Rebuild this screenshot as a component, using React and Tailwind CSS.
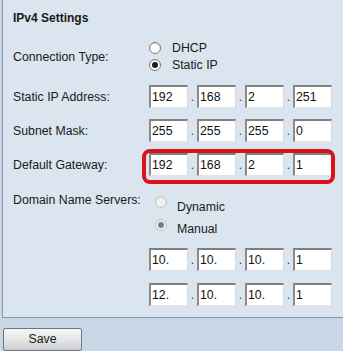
import React, { Fragment } from "react";

const font = { fontFamily: '"Liberation Sans", Arial, sans-serif' };

function Field({ v }) {
  return (
    <div className="w-[39px] h-[23px] bg-white border-t-2 border-l-2 border-r border-b border-t-[#7f7f7f] border-l-[#8a8a8a] border-r-[#d8d8d8] border-b-[#e4e4e4] flex items-center pl-[1px] text-[12.3px] leading-[14px] text-[#111]">
      {v}
    </div>
  );
}

function IP({ vals }) {
  return (
    <div className="flex items-center">
      {vals.map((v, i) => (
        <Fragment key={i}>
          {i > 0 && (
            <span className="w-[9px] text-center text-[12.3px] leading-[14px] text-[#333]">.</span>
          )}
          <Field v={v} />
        </Fragment>
      ))}
    </div>
  );
}

function Radio({ checked, disabled }) {
  return (
    <span
      className={
        "w-[12px] h-[12px] rounded-full flex items-center justify-center shrink-0 border " +
        (disabled
          ? "bg-[#f0f0f0] border-[#c4c4c4] shadow-[inset_0_1px_1px_rgba(0,0,0,0.08)]"
          : "bg-white border-[#7a7a7a] shadow-[inset_0_1px_1px_rgba(0,0,0,0.15)]")
      }
    >
      {checked && (
        <span
          className={
            "w-[6px] h-[6px] rounded-full " + (disabled ? "bg-[#7d7d7d]" : "bg-[#1c1c1c]")
          }
        />
      )}
    </span>
  );
}

function Row({ label, children, className = "" }) {
  return (
    <div className={"flex items-center " + className}>
      <div className="w-[136px] text-[12.3px] leading-[14px] text-[#1a1a1a]">{label}</div>
      {children}
    </div>
  );
}

export default function App() {
  return (
    <div className="w-[343px] h-[351px] overflow-hidden bg-[#c7d7e6]" style={font}>
      <div className="ml-[2px] bg-[#dbe5ef] border-l border-b border-[#8797a8] pl-[10px] pt-[11px] pb-[11px]">
        <div className="text-[12px] leading-[14px] font-bold text-[#1a1a1a]">IPv4 Settings</div>

        <div className="flex mt-[14px] h-[34px]">
          <div className="w-[136px] pt-[11px] text-[12.3px] leading-[14px] text-[#1a1a1a]">
            Connection Type:
          </div>
          <div className="flex flex-col">
            <div className="flex items-center h-[17px]">
              <Radio />
              <span className="ml-[11px] text-[12.3px] leading-[14px] text-[#1a1a1a]">DHCP</span>
            </div>
            <div className="flex items-center h-[17px]">
              <Radio checked />
              <span className="ml-[11px] text-[12.3px] leading-[14px] text-[#1a1a1a]">Static IP</span>
            </div>
          </div>
        </div>

        <Row label="Static IP Address:" className="mt-[12px]">
          <IP vals={["192", "168", "2", "251"]} />
        </Row>
        <Row label="Subnet Mask:" className="mt-[11px]">
          <IP vals={["255", "255", "255", "0"]} />
        </Row>
        <Row label="Default Gateway:" className="mt-[11px]">
          <div className="relative">
            <IP vals={["192", "168", "2", "1"]} />
            <div className="absolute left-[-7px] top-[-4px] w-[193px] h-[35px] border-[4px] border-[#d9121c] rounded-[8px] pointer-events-none" />
          </div>
        </Row>

        <div className="flex mt-[17px]">
          <div className="w-[136px] text-[12.3px] leading-[14px] text-[#1a1a1a]">Domain Name Servers:</div>
          <div className="flex flex-col">
            <div className="flex items-start ml-[6px] mt-[3px]">
              <Radio disabled />
              <span className="ml-[10px] mt-[4px] text-[12.3px] leading-[14px] text-[#1a1a1a]">Dynamic</span>
            </div>
            <div className="flex items-start ml-[6px] mt-[5px]">
              <Radio checked disabled />
              <span className="ml-[10px] mt-[3px] text-[12.3px] leading-[14px] text-[#1a1a1a]">Manual</span>
            </div>
            <div className="mt-[12px]">
              <IP vals={["10.", "10.", "10.", "1"]} />
            </div>
            <div className="mt-[12px]">
              <IP vals={["12.", "10.", "10.", "1"]} />
            </div>
          </div>
        </div>
      </div>

      <button className="mt-[10px] ml-[3px] w-[79px] h-[23px] border border-[#6f7680] rounded-[2px] bg-gradient-to-b from-[#f7f7f7] via-[#e6e6e6] to-[#c9cdd2] text-[12.3px] leading-[14px] text-[#1a1a1a] flex items-center justify-center pb-[2px]">
        Save
      </button>
    </div>
  );
}
